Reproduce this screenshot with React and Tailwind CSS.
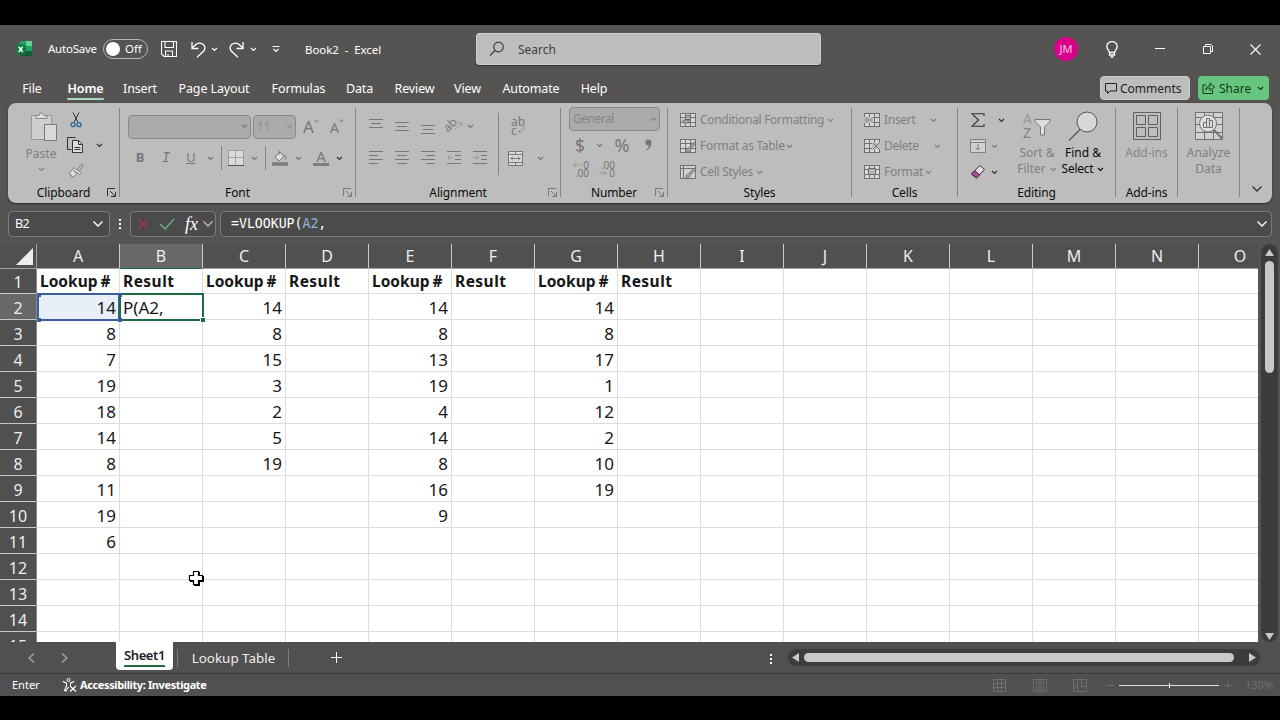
import React from "react";

const columns = ["A", "B", "C", "D", "E", "F", "G", "H", "I", "J", "K", "L", "M", "N", "O"];
const rowNumbers = [1, 2, 3, 4, 5, 6, 7, 8, 9, 10, 11, 12, 13, 14, 15];

const values = {
  A: [14, 8, 7, 19, 18, 14, 8, 11, 19, 6],
  C: [14, 8, 15, 3, 2, 5, 19],
  E: [14, 8, 13, 19, 4, 14, 8, 16, 9],
  G: [14, 8, 17, 1, 12, 2, 10, 19],
};

const menuTabs = [
  { name: "File", width: "w-[20px]", gap: "mr-[25px]" },
  { name: "Home", width: "w-[37px]", gap: "mr-[20px]" },
  { name: "Insert", width: "w-[32px]", gap: "mr-[22px]" },
  { name: "Page Layout", width: "w-[72px]", gap: "mr-[22px]" },
  { name: "Formulas", width: "w-[53px]", gap: "mr-[21px]" },
  { name: "Data", width: "w-[27px]", gap: "mr-[21px]" },
  { name: "Review", width: "w-[41px]", gap: "mr-[19px]" },
  { name: "View", width: "w-[27px]", gap: "mr-[22px]" },
  { name: "Automate", width: "w-[56px]", gap: "mr-[21px]" },
  { name: "Help", width: "w-[28px]", gap: "" },
];

const Svg = ({ w, h, className = "", children }) => (
  <svg
    width={w}
    height={h}
    viewBox={`0 0 ${w} ${h}`}
    fill="none"
    stroke="currentColor"
    strokeWidth="1"
    className={`shrink-0 ${className}`}
  >
    {children}
  </svg>
);

const Chevron = ({ className = "" }) => (
  <Svg w={7} h={5} className={className}>
    <path d="M1 1l2.5 2.5L6 1" strokeWidth="1.2" />
  </Svg>
);

const BigChevron = ({ className = "" }) => (
  <Svg w={12} h={8} className={className}>
    <path d="M1.5 1.5L6 6l4.5-4.5" strokeWidth="1.4" />
  </Svg>
);

// one centred slot in a ribbon row
const Slot = ({ className = "", children }) => (
  <div className={`flex shrink-0 items-center justify-center ${className}`}>{children}</div>
);

const Launcher = ({ className = "" }) => (
  <Svg w={9} h={9} className={className}>
    <path d="M.5 8V.5H8M3 3l5 5M8.5 4v4.500H4" />
  </Svg>
);

const Group = ({ label, width, launcher, children }) => (
  <div className={`flex h-full shrink-0 flex-col ${width}`}>
    <div className="mt-px flex h-[89px] flex-col border-r border-[#858585]">
      <div className="-mt-px h-[78px] shrink-0">{children}</div>
      <div className="relative flex h-4 shrink-0 items-center justify-center text-xs tracking-[-0.01em] text-[#0c0c0c]">
        <span>{label}</span>
        {launcher && <Launcher className={`absolute right-[3px] top-[3px] ${launcher}`} />}
      </div>
    </div>
  </div>
);

const Lines = ({ rows, h = 14 }) => (
  <Svg w={14} h={h}>
    {rows.map(([x1, x2, y]) => (
      <path key={y} d={`M${x1} ${y}.5H${x2}`} />
    ))}
  </Svg>
);

const GridIcon = ({ children }) => (
  <Svg w={16} h={14} className="text-[#707070]">
    <rect x=".5" y=".5" width="15" height="13" fill="#d6d6d6" />
    <path d="M.5 4.500h15M.5 9.500h15M5.500 .5v13M10.500 .5v13" />
    {children}
  </Svg>
);

const StyleRow = ({ text, icon, chev = "ml-[5px]", textClass = "" }) => (
  <div className="flex h-[26px] items-center text-[#808080]">
    {icon}
    <span className={`ml-1 whitespace-nowrap text-xs tracking-[-0.3px] ${textClass}`}>{text}</span>
    <Chevron className={chev} />
  </div>
);

const TitleBar = () => (
  <div className="flex h-12 shrink-0 items-center pl-4 text-white">
    <Svg w={16} h={16}>
      <rect x="4" y="0" width="12" height="15" rx="1" fill="#21a366" stroke="none" />
      <rect x="10" y="0" width="6" height="5" fill="#5fd39a" stroke="none" />
      <rect x="4" y="5" width="6" height="5" fill="#107c41" stroke="none" />
      <rect x="4" y="10" width="12" height="5" fill="#185c37" stroke="none" />
      <rect x="0" y="3.5" width="9.5" height="9.5" rx="1" fill="#107c41" stroke="none" />
      <path d="M2.7 5.800l4 5.200M6.700 5.800l-4 5.200" stroke="#fff" strokeWidth="1.4" />
    </Svg>
    <span className="ml-4 w-12 whitespace-nowrap text-[11.5px] tracking-[-0.02em]">AutoSave</span>
    <div className="ml-[7px] flex h-5 w-[45px] items-center rounded-full border border-[#b5b5b5] pl-[2px]">
      <div className="h-[14px] w-[14px] rounded-full bg-white" />
      <span className="ml-[5px] text-[11.5px]">Off</span>
    </div>
    <Svg w={16} h={16} className="ml-[13px]">
      <path d="M.5.5h15v15H3L.5 13zM4 .5v6h8.500v-6M4.500 15.500v-5.500h7v5.500M7 13v2.500" strokeWidth="1.1" />
    </Svg>
    <Svg w={15} h={17} className="ml-[14px]">
      <path d="M1 1v6.500h6.500M1.300 7.200C4 3.500 7 1.600 10 2.300c4 1 5 5 2.500 8L6 16.300" strokeWidth="1.3" />
    </Svg>
    <Chevron className="ml-[5px]" />
    <Svg w={15} h={17} className="ml-[11px]">
      <path d="M14 1v6.500H7.500M13.700 7.200C11 3.500 8 1.600 5 2.300c-4 1-5 5-2.500 8L9 16.300" strokeWidth="1.3" />
    </Svg>
    <Chevron className="ml-[6px]" />
    <Svg w={8} h={7} className="ml-[15px]">
      <path d="M.5.5h7M1.500 3L4 5.500 6.500 3" strokeWidth="1.1" />
    </Svg>
    <span className="ml-[25px] mt-px w-[76px] whitespace-pre text-[11.5px] tracking-[-0.005em]">Book2  -  Excel</span>
    <div className="ml-[95px] flex h-8 w-[345px] items-center rounded-[3px] border border-[#cfcfcf] bg-[#bdbdbd] pl-3 text-[#3f3f3f] shadow-[0_1px_1px_#333]">
      <Svg w={16} h={16}>
        <circle cx="9.500" cy="6" r="4.800" strokeWidth="1.2" />
        <path d="M6 9.500L1 14.500" strokeWidth="1.3" />
      </Svg>
      <span className="ml-[13px] mt-px text-xs">Search</span>
    </div>
    <div className="ml-[233px] flex h-6 w-6 items-center justify-center rounded-full bg-[#d8008a] text-[11px] text-[#ffc6e9]">
      JM
    </div>
    <Svg w={12} h={17} className="ml-[28px]">
      <path d="M3.500 11.500C3.500 9.500.8 8.500.8 5.600a5.200 5 0 0 1 10.400 0c0 2.900-2.700 3.900-2.700 5.900zM3.500 11.500v2.500h5v-2.500M4.500 16h3" strokeWidth="1.3" />
    </Svg>
    <Svg w={10} h={2} className="ml-[37px]">
      <path d="M0 .5h10" />
    </Svg>
    <Svg w={10} h={10} className="ml-[38px]">
      <path d="M.5 2.500h7v7h-7zM2.500 2V.5H8l1.500 1.500v5.500H8" />
    </Svg>
    <Svg w={11} h={11} className="ml-[37px]">
      <path d="M.5.5l10 10M10.500.5l-10 10" strokeWidth="1.1" />
    </Svg>
  </div>
);

const MenuBar = () => (
  <div className="flex h-[30px] shrink-0 items-center pl-[22px] text-white">
    {menuTabs.map((tab) => {
      const isActive = tab.name === "Home";
      return (
        <div key={tab.name} className={`flex h-full shrink-0 flex-col items-center ${tab.width} ${tab.gap}`}>
          <span
            className={`mt-[6px] h-[18px] whitespace-nowrap text-[12.500px] leading-5 tracking-[-0.01em] ${
              isActive ? "font-semibold" : ""
            }`}
          >
            {tab.name}
          </span>
          {isActive && <div className="mt-px h-[2px] w-full rounded-full bg-[#a9d8be]" />}
        </div>
      );
    })}
    <div className="ml-[492px] flex h-6 w-[90px] items-center rounded border border-[#cbcbcb] bg-[#bdbdbd] pl-1 text-[#222]">
      <Svg w={12} h={11}>
        <path d="M.5.5h11v7.500H5L2.500 10.500V8h-2z" />
      </Svg>
      <span className="ml-[3px] mt-px text-xs">Comments</span>
    </div>
    <div className="ml-2 flex h-6 w-[71px] items-center rounded bg-[#66c67e] pl-1 text-[#173620]">
      <Svg w={13} h={12}>
        <path d="M4 3H1v8.500h9.500V8M3.500 8C4 5 6 4 8 4V1l4.500 4L8 8.500V6C6 6 4.500 6.500 3.500 8z" />
      </Svg>
      <span className="ml-1 mt-px text-xs">Share</span>
      <Chevron className="ml-[6px]" />
    </div>
  </div>
);

const Ribbon = () => (
  <div className="mx-2 flex h-[100px] shrink-0 rounded-lg bg-[#bdbdbd] pt-1 shadow-[0_1px_2px_#2b2b2b]">
    <Group label="Clipboard" width="w-[112px]" launcher="text-[#333]">
      <div className="flex">
        <div className="ml-[13px] flex w-10 flex-col items-center pt-[5px] text-[#808080]">
          <Svg w={28} h={30} className="ml-[5px]">
            <path d="M1.500 3.500h20v24h-20z" fill="#cfcfcf" stroke="#999" />
            <path d="M6 6.500V3.500h3a2.500 2.500 0 0 1 5 0h3v3z" fill="#ddd" stroke="#888" />
            <path d="M14.500 12.500h12v16h-12z" fill="#d9d9d9" stroke="#777" />
          </Svg>
          <span className="mt-[4px] text-xs">Paste</span>
          <Chevron className="mt-[5px]" />
        </div>
        <div className="ml-[6px] flex flex-col">
          <Slot className="h-[25px] w-[18px]">
            <Svg w={12} h={16} className="text-[#333]">
              <path d="M3 .5l5 10M9 .5L4 10.500" />
              <circle cx="3" cy="12.700" r="2" stroke="#2c6594" strokeWidth="1.3" />
              <circle cx="9" cy="12.700" r="2" stroke="#2c6594" strokeWidth="1.3" />
            </Svg>
          </Slot>
          <div className="flex h-[26px] items-center">
            <Svg w={16} h={16} className="text-[#333]">
              <path d="M4.500 12.500h-4V.5h8" />
              <path d="M5.500 3.500h6l4 4v8h-10z" fill="#dcdcdc" />
              <path d="M11.500 3.500v4h4M7.500 10.500h6M7.500 12.500h6" />
            </Svg>
            <Chevron className="ml-[13px] text-[#333]" />
          </div>
          <Slot className="h-[25px] w-[18px]">
            <Svg w={16} h={16} className="text-[#858585]">
              <path d="M9.500 6.500L13.500.8l1.700 1.300-3.700 6.200z" fill="#bbb" />
              <path d="M5.500 4.500l7.500 5-1.500 2-7-4.700z" fill="#ddd" />
              <path d="M4.500 6.500L1 10.500l1.500.5L2 12.500l2 .3v1.700l5-3.700z" fill="#ddd" />
            </Svg>
          </Slot>
        </div>
      </div>
    </Group>

    <Group label="Font" width="w-[236px]" launcher="text-[#777]">
      <div className="pl-2 pt-2 text-[#777]">
        <div className="flex h-[23px] items-center">
          <div className="flex h-6 w-[123px] items-center justify-end rounded border border-[#8a8a8a] bg-[#ababab] pr-[2px]">
            <Chevron />
          </div>
          <div className="ml-[2px] flex h-6 w-[43px] items-center justify-between rounded border border-[#8a8a8a] bg-[#ababab] pl-[3px] pr-[2px] text-xs text-[#8c9596]">
            <span>11</span>
            <Chevron />
          </div>
          <div className="ml-[7px] flex h-5 w-[18px]">
            <span className="text-[17px] leading-5">A</span>
            <Svg w={5} h={4} className="mt-[2px]">
              <path d="M.5 3.500l2-2.500 2 2.500" />
            </Svg>
          </div>
          <div className="ml-[9px] flex h-5 w-4">
            <span className="text-[14px] leading-[22px]">A</span>
            <Svg w={5} h={4} className="mt-[2px]">
              <path d="M.5.5l2 2.500 2-2.500" />
            </Svg>
          </div>
        </div>
        <div className="mt-[8px] flex h-6 items-center">
          <Slot className="w-6 text-[13px] font-bold">B</Slot>
          <Slot className="w-7 font-['Liberation_Mono'] text-sm italic">I</Slot>
          <Slot className="w-[22px] text-[13px] underline">U</Slot>
          <Slot className="w-4"><Chevron /></Slot>
          <Slot className="w-[6px]"><div className="h-6 w-px bg-[#858585]" /></Slot>
          <Slot className="w-[23px]">
            <Svg w={16} h={16}>
              <path d="M.5.5h15v15H.5z" fill="#dadada" strokeDasharray="1 1" />
              <path d="M7.500 .5v15M.5 7.500h15" strokeDasharray="1 1" />
              <path d="M0 15.500h16" stroke="#555" />
            </Svg>
          </Slot>
          <Slot className="w-[15px]"><Chevron /></Slot>
          <Slot className="w-[6px]"><div className="h-6 w-px bg-[#858585]" /></Slot>
          <Slot className="w-6">
            <Svg w={16} h={16}>
              <path d="M3 7l5-5 4 4.500-5 4.500z" fill="#ddd" />
              <path d="M7 .5v4M12.500 5c1.500 1.500 1.500 3 1 4.500" />
              <path d="M0 14h16" strokeWidth="3.500" stroke="#7d7d7d" />
            </Svg>
          </Slot>
          <Slot className="w-3"><Chevron /></Slot>
          <Slot className="w-[34px]">
            <div className="flex flex-col items-center">
              <span className="h-[13px] text-[15px] leading-[13px]">A</span>
              <div className="h-[3px] w-4 bg-[#7d7d7d]" />
            </div>
          </Slot>
          <Chevron className="ml-[-2px] text-[#333]" />
        </div>
      </div>
    </Group>

    <Group label="Alignment" width="w-[205px]" launcher="text-[#777]">
      <div className="flex pt-[6px] text-[#777]">
        <div className="ml-[7px] w-[130px]">
          <div className="flex h-[26px] items-center">
            <Slot className="w-[26px] pb-[5px]"><Lines h={9} rows={[[0, 14, 0], [2, 12, 4], [0, 14, 8]]} /></Slot>
            <Slot className="w-[26px]"><Lines h={9} rows={[[0, 14, 0], [2, 12, 4], [0, 14, 8]]} /></Slot>
            <Slot className="w-[26px] pt-[7px]"><Lines h={9} rows={[[0, 14, 0], [2, 12, 4], [0, 14, 8]]} /></Slot>
            <Slot className="w-[24px] pb-[3px]">
              <span className="-rotate-45 text-[12px] leading-none">ab</span>
              <Svg w={9} h={12} className="ml-[-4px]">
                <path d="M0 11L8 4M4 3.500h4v4" stroke="#999" />
              </Svg>
            </Slot>
            <Chevron className="ml-[2px]" />
          </div>
          <div className="mt-[6px] flex h-[26px] items-center">
            <Slot className="w-[26px]"><Lines rows={[[0, 14, 0], [0, 9, 4], [0, 14, 8], [0, 9, 12]]} /></Slot>
            <Slot className="w-[26px]"><Lines rows={[[0, 14, 0], [2, 12, 4], [0, 14, 8], [2, 12, 12]]} /></Slot>
            <Slot className="w-[26px]"><Lines rows={[[0, 14, 0], [5, 14, 4], [0, 14, 8], [5, 14, 12]]} /></Slot>
            <Slot className="w-[26px]">
              <Svg w={14} h={14}>
                <path d="M0 .5h14M8 4.500h6M8 8.500h6M0 12.500h14" />
                <path d="M6 6.500H.5M3 4L.5 6.500 3 9" stroke="#999" />
              </Svg>
            </Slot>
            <Slot className="w-[26px]">
              <Svg w={14} h={14}>
                <path d="M0 .5h14M8 4.500h6M8 8.500h6M0 12.500h14" />
                <path d="M0 6.500h5.500M3 4l2.500 2.500L3 9" stroke="#999" />
              </Svg>
            </Slot>
          </div>
        </div>
        <div className="ml-[5px] h-[62px] w-px bg-[#858585]" />
        <div className="ml-[9px]">
          <Slot className="h-[26px] w-5">
            <div className="relative flex flex-col text-xs leading-[9px]">
              <span>ab</span>
              <span>c</span>
              <Svg w={7} h={8} className="absolute left-[7px] top-[9px]">
                <path d="M6 0v3c0 2-2 2.500-5.500 2.500M3 3L.5 5.500 3 8" stroke="#999" />
              </Svg>
            </div>
          </Slot>
          <div className="mt-[6px] flex h-[26px] items-center">
            <Svg w={15} h={15}>
              <path d="M.5.5h14v14H.5z" fill="#dadada" />
              <path d="M.5 3.500h14M.5 11.500h14M7.500 .5v3M7.500 11.500v3M3 7.500h9M5 5.500l-2 2 2 2M10 5.500l2 2-2 2" />
            </Svg>
            <Chevron className="ml-[14px]" />
          </div>
        </div>
      </div>
    </Group>

    <Group label="Number" width="w-[107px]" launcher="text-[#777]">
      <div className="pl-2 text-[#777]">
        <div className="flex h-6 w-[91px] items-center justify-between rounded border border-[#8a8a8a] bg-[#ababab] pl-[3px] pr-[2px] text-xs text-[#858585]">
          <span className="tracking-[-0.04em]">General</span>
          <Chevron />
        </div>
        <div className="mt-[1px] flex h-[26px] items-center">
          <Slot className="w-[22px] text-[18px]">$</Slot>
          <Slot className="w-4"><Chevron /></Slot>
          <Slot className="w-[30px] text-[18px]">%</Slot>
          <Slot className="w-[22px]">
            <Svg w={8} h={12}>
              <path d="M4 .5a3.200 3.200 0 0 1 3.500 3.300C7.500 8 5 10.500 2 11.500l-.3-.8C4 9.500 5 8 4.700 6.500A3 3 0 1 1 4 .5z" fill="currentColor" stroke="none" />
            </Svg>
          </Slot>
        </div>
        <div className="mt-[3px] flex h-5 gap-[10px] pl-1 text-[10px] leading-[8px]">
          <div className="relative w-4 text-right">
            <Svg w={8} h={6} className="absolute left-0 top-[1px]">
              <path d="M8 3H.5M3 .5L.5 3 3 5.500" stroke="#999" />
            </Svg>
            0<br />.00
          </div>
          <div className="relative w-4 text-right">
            .00<br />0
            <Svg w={8} h={6} className="absolute left-0 top-[9px]">
              <path d="M0 3h7.500M5 .5L7.500 3 5 5.500" stroke="#999" />
            </Svg>
          </div>
        </div>
      </div>
    </Group>

    <Group label="Styles" width="w-[184px]">
      <div className="pl-3">
        <StyleRow
          text="Conditional Formatting"
          textClass="w-[125px]"
          chev="ml-[2px]"
          icon={
            <GridIcon>
              <path d="M5.500 2.500h5v4h-5zM3 7h6v3H3z" fill="#aaa" />
            </GridIcon>
          }
        />
        <StyleRow
          text="Format as Table"
          textClass="w-[84px]"
          chev="ml-[2px]"
          icon={
            <GridIcon>
              <path d="M6 13c0-3 1-4 3-4l5-6 1.500 1.500-5.500 6c0 2-2 3-4 2.500z" fill="#aaa" />
            </GridIcon>
          }
        />
        <StyleRow
          text="Cell Styles"
          textClass="w-[54px]"
          chev="ml-[2px]"
          icon={
            <Svg w={16} h={14} className="text-[#707070]">
              <path d="M.5.5h15v13H.5z" fill="#d0d0d0" />
              <path d="M.5 3.500h15M3.500.5v13" />
              <path d="M6 13c0-3 1-4 3-4l5-6 1.500 1.500-5.500 6c0 2-2 3-4 2.500z" fill="#aaa" />
            </Svg>
          }
        />
      </div>
    </Group>

    <Group label="Cells" width="w-[106px]">
      <div className="pl-3">
        <StyleRow
          text="Insert"
          textClass="w-[42px]"
          chev="ml-[4px]"
          icon={
            <GridIcon>
              <path d="M0 4h9v6H0z" fill="#bdbdbd" stroke="none" />
              <path d="M9 7H1M4 4L1 7l3 3" stroke="#888" />
            </GridIcon>
          }
        />
        <StyleRow
          text="Delete"
          textClass="w-[46px]"
          chev="ml-[4px]"
          icon={
            <GridIcon>
              <path d="M8 4h8v6H8z" fill="#bdbdbd" stroke="none" />
              <path d="M9 4l6 6M15 4l-6 6" stroke="#777" />
            </GridIcon>
          }
        />
        <StyleRow
          text="Format"
          textClass="w-[39px]"
          chev="ml-[2px]"
          icon={
            <GridIcon>
              <path d="M4.500 3.500h7v6h-7z" fill="#b5b5b5" stroke="#666" />
            </GridIcon>
          }
        />
      </div>
    </Group>

    <Group label="Editing" width="w-[158px]">
      <div className="flex">
        <div className="ml-3 w-[43px] text-[#808080]">
          <div className="flex h-[26px] items-center text-[#333]">
            <Svg w={14} h={14} className="ml-[1px]">
              <path d="M13 3V.7H1L7.500 7 1 13.300h12V11" strokeWidth="1.1" />
            </Svg>
            <Chevron className="ml-[13px]" />
          </div>
          <div className="flex h-[26px] items-center">
            <Svg w={16} h={14}>
              <path d="M.5.5h15v13H.5z" fill="#d0d0d0" />
              <path d="M.5 3.500h15M8 5v6M5.500 8.500L8 11l2.500-2.500" />
            </Svg>
            <Chevron className="ml-[5px]" />
          </div>
          <div className="flex h-[26px] items-center">
            <Svg w={16} h={16} className="text-[#3a2a38]">
              <path d="M10 1.500l4.500 4L6.500 14 1.500 10z" fill="#ead9e8" />
              <path d="M4.800 6.800l5 4L6.500 14 1.500 10z" fill="#b8479f" />
            </Svg>
            <Chevron className="ml-[5px] text-[#333]" />
          </div>
        </div>
        <div className="ml-px flex w-[46px] flex-col items-center pt-[5px] text-xs leading-4 text-[#808080]">
          <div className="flex h-[31px] w-full pl-[9px]">
            <div className="flex w-[11px] flex-col text-[14px] leading-[14px]">
              <span className="text-[#999]">A</span>
              <span>Z</span>
            </div>
            <Svg w={17} h={18} className="mt-[6px]">
              <path d="M1 1.500h15v2L10.500 9v8h-4V9L1 3.500z" fill="#ddd" stroke="#777" />
            </Svg>
          </div>
          <span className="mt-[2px] whitespace-nowrap">Sort &amp;</span>
          <div className="flex items-center gap-1">
            Filter
            <Chevron />
          </div>
        </div>
        <div className="flex w-[46px] flex-col items-center pt-[4px] text-xs leading-4 text-[#0c0c0c]">
          <Svg w={30} h={31}>
            <circle cx="19" cy="11" r="10" fill="#d8d8d8" stroke="#555" />
            <path d="M12 18.500L1 29.500" strokeWidth="1.3" stroke="#555" />
          </Svg>
          <span className="mt-[3px] whitespace-nowrap">Find &amp;</span>
          <div className="flex items-center gap-1 tracking-[-0.02em]">
            Select
            <Chevron />
          </div>
        </div>
      </div>
    </Group>

    <Group label="Add-ins" width="w-[62px]">
      <div className="flex flex-col items-center pt-[5px] text-xs leading-4 text-[#858585]">
        <Svg w={28} h={28} className="text-[#606060]">
          <path d="M.5.5h27v27H.5zM3.500 3.500h9v9h-9zM15.500 3.500h9v9h-9zM3.500 15.500h9v9h-9zM15.500 15.500h9v9h-9z" />
        </Svg>
        <span className="mt-[5px]">Add-ins</span>
      </div>
    </Group>

    <Group label="" width="w-[62px]">
      <div className="flex flex-col items-center pt-[5px] text-center text-xs leading-4 text-[#808080]">
        <Svg w={28} h={28} className="text-[#707070]">
          <path d="M.5.5h27v27H.5z" fill="#d2d2d2" />
          <path d="M.5 5.500h27M.5 12.500h27M.5 20.500h27M9.500.5v27M18.500.5v27" />
          <circle cx="13" cy="11.500" r="8.500" fill="#dedede" />
          <path d="M8.500 10.500h3v5h-3zM11.500 6.500h3v9h-3zM14.500 8.500h3v7h-3z" />
          <path d="M19 18l8.500 9" strokeWidth="2" />
        </Svg>
        <span className="mt-[5px]">Analyze<br />Data</span>
      </div>
    </Group>

    <div className="flex flex-1 items-end justify-center pb-[10px] pl-[2px] text-[#333]">
      <BigChevron />
    </div>
  </div>
);

const FormulaBar = () => (
  <div className="mx-2 mt-2 flex h-[26px] shrink-0 items-center text-white">
    <div className="flex h-full w-[102px] items-center justify-between rounded border border-[#7a7a7a] bg-[#4b4b4b] pl-[6px] pr-[5px] text-[12.500px]">
      <span className="tracking-[-0.05em]">B2</span>
      <BigChevron />
    </div>
    <div className="ml-[9px] flex w-[2px] flex-col gap-[2px]">
      <div className="h-[2px] w-[2px] bg-white" />
      <div className="h-[2px] w-[2px] bg-white" />
      <div className="h-[2px] w-[2px] bg-white" />
    </div>
    <div className="ml-[9px] flex h-full w-[86px] items-center rounded border border-[#7a7a7a] bg-[#4b4b4b] pl-[6px]">
      <Svg w={12} h={12}>
        <path d="M1 1l10 10M11 1L1 11" stroke="#9c3850" strokeWidth="1.6" />
      </Svg>
      <Svg w={16} h={12} className="ml-[10px]">
        <path d="M1 6l5 5L15 1" stroke="#6cab7c" strokeWidth="1.5" />
      </Svg>
      <span className="ml-[10px] w-4 font-['Liberation_Serif'] text-lg italic leading-none">fx</span>
      <BigChevron className="ml-px text-[#bbb]" />
    </div>
    <div className="ml-1 flex h-full flex-1 items-center justify-between rounded border border-[#7a7a7a] bg-[#4b4b4b] pl-[10px] pr-[3px] font-['DejaVu_Sans_Mono'] text-[13.200px]">
      <span>
        =VLOOKUP(<span className="text-[#8db4dc]">A2</span>,
      </span>
      <BigChevron />
    </div>
  </div>
);

const cellText = (col, row) => {
  if (row === 1) {
    if ("ACEG".includes(col)) return "Lookup #";
    if ("BDFH".includes(col)) return "Result";
    return "";
  }
  if (col === "B" && row === 2) return "P(A2,";
  return values[col]?.[row - 2] ?? "";
};

const Sheet = () => (
  <div className="mt-[7px] flex h-[398px] shrink-0">
    <div className="relative w-[1258px] overflow-hidden">
      <div className="flex h-[25px]">
        <div className="flex h-full w-[37px] shrink-0 items-end justify-end border-b border-r border-[#a0a0a0] bg-[#505050] pb-[3px] pr-[3px]">
          <Svg w={17} h={17}>
            <path d="M17 0v17H0z" fill="#ededed" stroke="none" />
          </Svg>
        </div>
        {columns.map((col) => (
          <div
            key={col}
            className={`flex h-full w-[83px] shrink-0 items-center justify-center border-b border-r text-base text-[#eee] ${
              col === "B" ? "border-b-[#1e6b43] border-r-[#c8c8c8] bg-[#686868]" : "border-b-[#a0a0a0] border-r-[#c8c8c8] bg-[#505050]"
            }`}
          >
            {col}
          </div>
        ))}
      </div>
      {rowNumbers.map((row) => (
        <div key={row} className={`flex ${row === 1 ? "h-[25px]" : "h-[26px]"}`}>
          <div
            className={`flex h-full w-[37px] shrink-0 items-center justify-center border-b border-r border-b-[#c8c8c8] border-r-[#888] pt-[2px] text-base text-[#eee] ${
              row === 2 ? "bg-[#686868]" : "bg-[#505050]"
            }`}
          >
            {row}
          </div>
          {columns.map((col) => (
            <div
              key={col}
              className={`flex h-full w-[83px] shrink-0 items-center whitespace-nowrap border-b border-r border-[#dcdcdc] px-[3px] pt-[2px] text-[#161616] ${
                row === 1 ? "text-[15.500px] font-bold" : "text-[17px]"
              } ${row === 1 && "ACEG".includes(col) ? "[word-spacing:-1px]" : ""} ${
                row === 1 && "BDFH".includes(col) ? "tracking-[0.03em]" : ""
              } ${row > 1 && col !== "B" ? "justify-end" : ""} ${col === "A" && row === 2 ? "bg-[#e8eff8]" : "bg-white"}`}
            >
              {cellText(col, row)}
            </div>
          ))}
        </div>
      ))}

      {/* referenced cell A2 and the cell being edited */}
      <div className="absolute left-[37px] top-[49px] h-[28px] w-[83px] border-2 border-[#3a5f9c]">
        <div className="absolute -left-[2px] -top-[2px] h-1 w-1 bg-[#3a5f9c]" />
        <div className="absolute -left-[2px] -bottom-[3px] h-1 w-1 bg-[#3a5f9c]" />
      </div>
      <div className="absolute left-[119px] top-[49px] h-[28px] w-[85px] border-2 border-[#1e6b43]">
        <div className="absolute -left-[3px] -top-[2px] h-1 w-1 bg-[#3a5f9c]" />
        <div className="absolute -bottom-[3px] -left-[3px] h-1 w-1 bg-[#3a5f9c]" />
        <div className="absolute -bottom-[3px] -right-[3px] h-[5px] w-[5px] border-l border-t border-white bg-[#1e6b43]" />
      </div>
      {/* cross cursor */}
      <Svg w={17} h={17} className="absolute left-[188px] top-[326px]">
        <path d="M6 2h6v4h4v6h-4v4H6v-4H2V6h4z" fill="#000" stroke="none" />
        <path d="M5.500 1.500h5v4h4v5h-4v4h-5v-4h-4v-5h4z" fill="#fff" stroke="#000" strokeWidth="1.2" />
      </Svg>
    </div>
    <div className="ml-[3px] flex h-full w-[17px] flex-col items-center rounded-full bg-[#3c3c3c] pb-[2px] pt-[5px] text-[#c8c8c8]">
      <Svg w={9} h={7}>
        <path d="M4.500 0L9 7H0z" fill="currentColor" stroke="none" />
      </Svg>
      <div className="mt-[5px] h-[112px] w-[9px] rounded-full bg-[#c8c8c8]" />
      <Svg w={9} h={7} className="mt-auto">
        <path d="M4.500 7L9 0H0z" fill="currentColor" stroke="none" />
      </Svg>
    </div>
  </div>
);

const SheetTabs = () => (
  <div className="flex h-8 shrink-0 border-b border-[#3c3c3c] bg-[#505050] text-white">
    <Svg w={7} h={10} className="ml-7 mt-[11px] text-[#aaa]">
      <path d="M6 .5L1 5l5 4.500" strokeWidth="1.2" />
    </Svg>
    <Svg w={7} h={10} className="ml-[26px] mt-[11px] text-[#aaa]">
      <path d="M1 .5L6 5 1 9.500" strokeWidth="1.2" />
    </Svg>
    <div className="ml-12 flex h-[28px] w-[57px] flex-col items-center rounded-b bg-white text-[#222]">
      <span className="mt-[3px] text-[13px] font-semibold leading-5 tracking-[-0.03em]">Sheet1</span>
      <div className="h-[2px] w-[41px] bg-[#1e6b43]" />
    </div>
    <div className="ml-[4px] mt-[7px] h-[18px] w-px bg-[#7c7c7c]" />
    <div className="w-[110px] pl-px pt-[6px] text-center text-[13.400px] leading-5 text-[#eee]">Lookup Table</div>
    <div className="mt-[7px] h-[18px] w-px bg-[#7c7c7c]" />
    <Svg w={11} h={11} className="ml-[42px] mt-[10px]">
      <path d="M5.500 0v11M0 5.500h11" />
    </Svg>
    <div className="ml-[428px] mt-3 flex w-[2px] flex-col gap-[2px]">
      <div className="h-[2px] w-[2px] bg-white" />
      <div className="h-[2px] w-[2px] bg-white" />
      <div className="h-[2px] w-[2px] bg-white" />
    </div>
    <div className="ml-4 mt-[7px] flex h-[17px] w-[472px] items-center rounded-full bg-[#3c3c3c] pl-[4px] pr-1 text-[#c8c8c8]">
      <Svg w={7} h={9}>
        <path d="M0 4.500L7 0v9z" fill="currentColor" stroke="none" />
      </Svg>
      <div className="ml-[5px] h-[9px] w-[430px] rounded-full bg-[#c8c8c8]" />
      <Svg w={7} h={9} className="ml-auto">
        <path d="M7 4.500L0 0v9z" fill="currentColor" stroke="none" />
      </Svg>
    </div>
  </div>
);

const StatusBar = () => (
  <div className="flex h-[22px] shrink-0 items-center bg-[#505050] pl-3 text-[11px] text-white">
    <span className="w-7">Enter</span>
    <Svg w={15} h={14} className="ml-[22px]">
      <circle cx="6.500" cy="2" r="1.500" />
      <path d="M.7 3.300C3 4.500 4 4.800 4.500 5v3L2.500 12.500l1.300.5L6.500 9M12.300 3.300C10 4.500 9 4.800 8.500 5v3M8 8l6 5.500M14 8l-6 5.500" strokeWidth="1.1" />
    </Svg>
    <span className="ml-[3px] w-[128px] whitespace-nowrap font-bold tracking-[-0.035em]">Accessibility: Investigate</span>
    <div className="ml-auto flex items-center text-[#6f6f6f]">
      <Svg w={13} h={13}>
        <path d="M.5.5h12v12H.5zM4.500.5v12M8.500.5v12M.5 4.500h12M.5 8.500h12" />
      </Svg>
      <Svg w={14} h={13} className="ml-[27px]">
        <path d="M.5.5h13v12H.5zM3.500 2.500h7v8h-7zM5 4.500h4M5 6.500h4M5 8.500h4" />
      </Svg>
      <Svg w={14} h={13} className="ml-[26px]">
        <path d="M.5.5h13v12H.5zM.5 7.500h4v5M4.500 7V.5M8.500.5v7h5" />
      </Svg>
      <Svg w={8} h={7} className="ml-[19px]">
        <path d="M0 3.500h8" />
      </Svg>
      <div className="relative ml-[5px] h-px w-[100px] bg-[#e0e0e0]">
        <div className="absolute -top-[2px] left-[50px] h-[5px] w-px bg-white" />
      </div>
      <Svg w={8} h={9} className="ml-[5px]">
        <path d="M0 4.500h8M4 .5v8" />
      </Svg>
      <span className="ml-[13px] mr-[9px] w-[26px]">130%</span>
    </div>
  </div>
);

const App = () => {
  return (
    <div className="flex h-[720px] w-[1280px] flex-col overflow-hidden bg-black py-[25px] font-['Noto_Sans',sans-serif]">
      <div className="flex h-[671px] shrink-0 flex-col bg-[#555452]">
        <TitleBar />
        <MenuBar />
        <Ribbon />
        <FormulaBar />
        <Sheet />
        <SheetTabs />
        <StatusBar />
      </div>
    </div>
  );
};

export default App;
